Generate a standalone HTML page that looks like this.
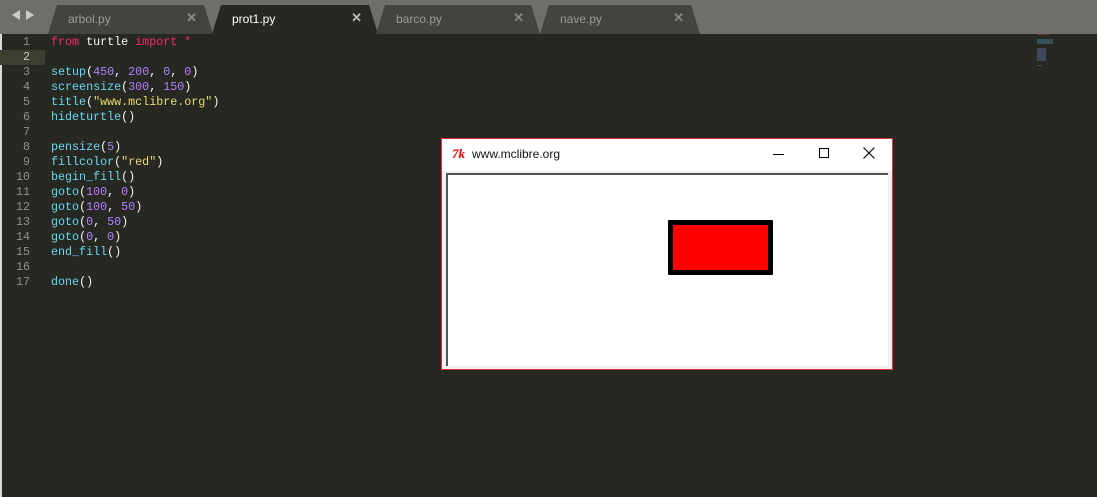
<!DOCTYPE html>
<html><head><meta charset="utf-8"><style>
*{margin:0;padding:0;box-sizing:border-box}
body{width:1097px;height:497px;overflow:hidden;background:#272822;position:relative;font-family:"Liberation Sans",sans-serif}
#bar{position:absolute;left:0;top:0;width:1097px;height:34px;background:#6e6f6a}
.tab{position:absolute;top:5px;height:29px;background:#43443f;clip-path:polygon(0 100%,9px 0,calc(100% - 9px) 0,100% 100%);color:#9a9b96;font-size:12px}
.tab span{position:absolute;top:7px;left:20px}
.tab b{position:absolute;top:5px;right:16px;font-weight:bold;font-size:13px;color:#8a8b86}
.tab.act{background:#272822;color:#fff}
.tab.act b{color:#bbb}
#code{position:absolute;left:0;top:35px;font-family:"Liberation Mono",monospace;font-size:11.7px;line-height:15px;color:#f8f8f2}
.l{height:15px;position:relative;width:1030px;white-space:pre}
.l i{font-style:normal;position:absolute;left:0;width:30px;text-align:right;color:#8f908a}
.l u{text-decoration:none;position:absolute;left:51px}
.cur{background:#3e3d32;width:45px}
.k{color:#f92672}.f{color:#66d9ef}.n{color:#ae81ff}.s{color:#e6db74}
#strip{position:absolute;left:0;top:34px;width:2px;height:463px;background:#d8dade}
#win{position:absolute;left:441px;top:138px;width:452px;height:232px;border:1px solid #e0323a;background:#f0f0f0}
#tb{position:absolute;left:0;top:0;width:450px;height:32px;background:#fff}
#canvas{position:absolute;left:4px;top:34px;width:442px;height:193px;background:#fff;border-top:2px solid #555;border-left:2px solid #555}
.mm div{opacity:.45}
</style></head><body>
<div id="bar">
<div style="position:absolute;left:12px;top:10px;width:0;height:0;border-top:5px solid transparent;border-bottom:5px solid transparent;border-right:8px solid #ccc"></div>
<div style="position:absolute;left:26px;top:10px;width:0;height:0;border-top:5px solid transparent;border-bottom:5px solid transparent;border-left:8px solid #ccc"></div>
<div class="tab" style="left:48px;width:165px"><span>arbol.py</span><b>✕</b></div>
<div class="tab act" style="left:212px;width:166px"><span>prot1.py</span><b>✕</b></div>
<div class="tab" style="left:376px;width:164px"><span>barco.py</span><b>✕</b></div>
<div class="tab" style="left:540px;width:160px"><span>nave.py</span><b>✕</b></div>
</div>
<div id="strip"></div>
<div id="code">
<div class="l"><i>1</i><u><span class="k">from</span> turtle <span class="k">import</span> <span class="k">*</span></u></div>
<div class="l"><div class="cur" style="position:absolute;left:0;top:0;height:15px"></div><i style="color:#c8c8c0">2</i></div>
<div class="l"><i>3</i><u><span class="f">setup</span>(<span class="n">450</span>, <span class="n">200</span>, <span class="n">0</span>, <span class="n">0</span>)</u></div>
<div class="l"><i>4</i><u><span class="f">screensize</span>(<span class="n">300</span>, <span class="n">150</span>)</u></div>
<div class="l"><i>5</i><u><span class="f">title</span>(<span class="s">"www.mclibre.org"</span>)</u></div>
<div class="l"><i>6</i><u><span class="f">hideturtle</span>()</u></div>
<div class="l"><i>7</i></div>
<div class="l"><i>8</i><u><span class="f">pensize</span>(<span class="n">5</span>)</u></div>
<div class="l"><i>9</i><u><span class="f">fillcolor</span>(<span class="s">"red"</span>)</u></div>
<div class="l"><i>10</i><u><span class="f">begin_fill</span>()</u></div>
<div class="l"><i>11</i><u><span class="f">goto</span>(<span class="n">100</span>, <span class="n">0</span>)</u></div>
<div class="l"><i>12</i><u><span class="f">goto</span>(<span class="n">100</span>, <span class="n">50</span>)</u></div>
<div class="l"><i>13</i><u><span class="f">goto</span>(<span class="n">0</span>, <span class="n">50</span>)</u></div>
<div class="l"><i>14</i><u><span class="f">goto</span>(<span class="n">0</span>, <span class="n">0</span>)</u></div>
<div class="l"><i>15</i><u><span class="f">end_fill</span>()</u></div>
<div class="l"><i>16</i></div>
<div class="l"><i>17</i><u><span class="f">done</span>()</u></div>
</div>
<div class="mm" style="position:absolute;left:1037px;top:34px;width:22px;height:36px">
<div style="height:1px;width:12px;background:#a04060"></div>
<div style="height:5px;width:16px;background:#4a8a96;margin-top:4px"></div>
<div style="height:13px;width:9px;background:#5a6aa0;margin-top:4px"></div>
<div style="height:1px;width:5px;background:#4a8a96;margin-top:4px"></div>
</div>
<div id="win">
<div id="tb">
<div style="position:absolute;left:10px;top:7px;color:#e00;font-weight:bold;font-style:italic;font-size:13px;font-family:'Liberation Serif',serif">7k</div>
<div style="position:absolute;left:30px;top:8px;font-size:12px;color:#111">www.mclibre.org</div>
<div style="position:absolute;left:331px;top:15px;width:11px;height:1px;background:#000"></div>
<div style="position:absolute;left:377px;top:9px;width:10px;height:10px;border:1px solid #000"></div>
<svg style="position:absolute;left:421px;top:8px" width="12" height="12"><path d="M0.5 0.5L11.5 11.5M11.5 0.5L0.5 11.5" stroke="#000" stroke-width="1.1"/></svg>
</div>
<div id="canvas">
<div style="position:absolute;left:220px;top:45px;width:105px;height:55px;background:#f00;border:5px solid #000;border-radius:1px"></div>
</div>
</div>
</body></html>
